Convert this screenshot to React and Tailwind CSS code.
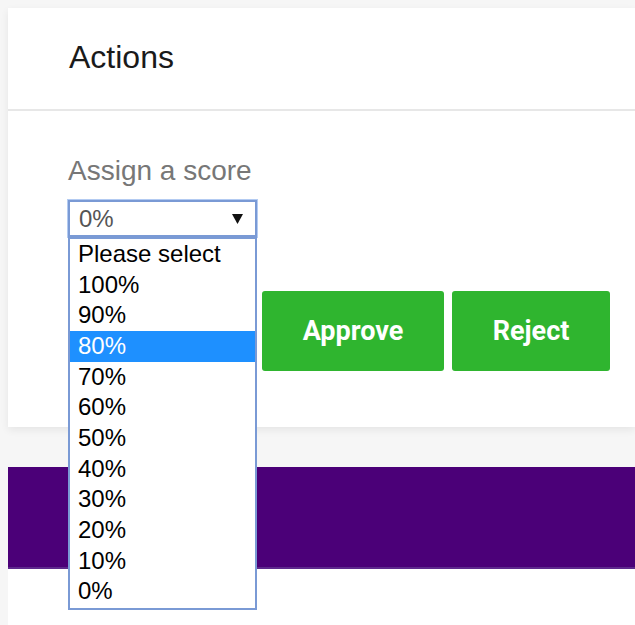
const SCORES = ["Please select", "100%", "90%", "80%", "70%", "60%", "50%", "40%", "30%", "20%", "10%", "0%"];

function ScoreList({ selected }) {
  return (
    <div className="absolute left-[68px] top-[237px] w-[189px] border-2 border-[#7a9ad5] bg-white pb-[1px]">
      {SCORES.map((s) => (
        <div
          key={s}
          className={
            s === selected
              ? "h-[30.67px] pl-[8px] text-[24px] leading-[30.67px] bg-[#1e90ff] text-white"
              : "h-[30.67px] pl-[8px] text-[24px] leading-[30.67px] text-black"
          }
        >
          {s}
        </div>
      ))}
    </div>
  );
}

export default function App() {
  return (
    <div className="relative min-h-[625px] overflow-hidden bg-[#f6f6f6] pl-2 pt-2 font-['Liberation_Sans',Arial,sans-serif]">
      {/* actions card */}
      <div className="h-[419px] bg-white shadow-[0_3px_8px_rgba(0,0,0,0.07)]">
        <div className="flex h-[103px] items-center border-b-2 border-[#e7e7e7] pb-[4px] pl-[61px]">
          <h2 className="text-[32px] leading-[36px] text-[#1a1a1a]">Actions</h2>
        </div>
        <div className="pl-[60px] pt-[44px]">
          <label className="block text-[28px] leading-[32px] text-[#777]">Assign a score</label>
          <div className="mt-[13px] flex h-[37px] w-[189px] items-center justify-between border-2 border-[#7a9ad5] pl-[9px] pr-[12px] outline outline-1 outline-[#b3cbf2]">
            <span className="text-[24px] leading-none text-[#555]">0%</span>
            <svg width="11" height="10" viewBox="0 0 11 10">
              <path d="M0 0 H11 L5.5 10 Z" fill="#111" />
            </svg>
          </div>
          <div className="ml-[194px] mt-[54px] flex gap-2 font-['Roboto',sans-serif]">
            <button className="h-[80px] w-[182px] rounded-[3px] bg-[#2fb52f] text-[27px] font-bold text-white">
              Approve
            </button>
            <button className="h-[80px] w-[158px] rounded-[3px] bg-[#2fb52f] text-[27px] font-bold text-white">
              Reject
            </button>
          </div>
        </div>
      </div>

      <div className="mt-[40px] h-[102px] border-b-2 border-[#5e2a8d] bg-[#4b0078]" />
      <div className="h-[60px] bg-white" />

      <ScoreList selected="80%" />
    </div>
  );
}
